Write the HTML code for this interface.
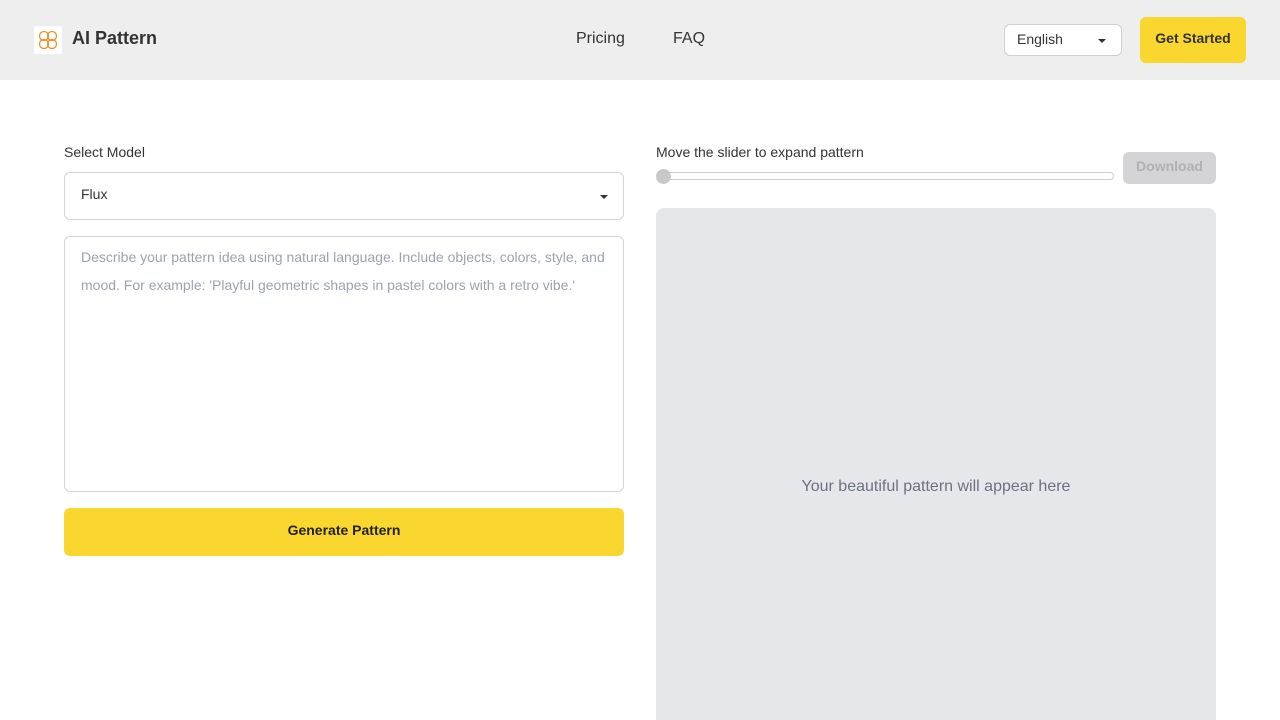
<!DOCTYPE html>
<html><head><meta charset="utf-8"><style>
*{box-sizing:border-box;margin:0;padding:0}
html,body{width:1280px;height:720px;overflow:hidden}
body{background:#fff;font-family:"Liberation Sans",sans-serif;color:#333;position:relative}
header{position:absolute;left:0;top:0;width:1280px;height:80px;background:#eeeeee}
.logo{position:absolute;left:34px;top:26px;width:28px;height:28px;background:#fff;border-radius:2px}
.brand{position:absolute;left:72px;top:28px;font-size:18px;font-weight:bold;color:#333}
.nav{position:absolute;top:30px;font-size:16px;color:#333}
.lang{position:absolute;left:1004px;top:24px;width:118px;height:32px;border:1px solid #d0d0d0;border-radius:6px;background:#fff;font-size:14px;padding:6px 12px;color:#333}
.caret{position:absolute;width:0;height:0;border-left:4px solid transparent;border-right:4px solid transparent;border-top:4px solid #333}
.gs{position:absolute;left:1140px;top:17px;width:106px;height:46px;background:#fad72e;border-radius:6px;font-size:14px;font-weight:bold;text-align:center;line-height:43px;color:#333}
.lbl{position:absolute;font-size:14px;color:#333}
.sel{position:absolute;left:64px;top:172px;width:560px;height:48px;border:1px solid #d4d4d4;border-radius:6px;font-size:14px;padding:13px 16px}
.ta{position:absolute;left:64px;top:236px;width:560px;height:256px;border:1px solid #d4d4d4;border-radius:6px;font-size:14px;padding:6px 16px;color:#9ca3af;line-height:28px}
.gen{position:absolute;left:64px;top:508px;width:560px;height:48px;background:#fad72e;border-radius:6px;text-align:center;line-height:44px;font-weight:bold;font-size:14px;color:#222}
.track{position:absolute;left:658px;top:172px;width:456px;height:8px;border:1px solid #ccc;border-radius:4px;background:#fff}
.thumb{position:absolute;left:656px;top:169px;width:15px;height:15px;border-radius:50%;background:#c8c8c8}
.dl{position:absolute;left:1123px;top:152px;width:93px;height:32px;background:#d4d4d6;border-radius:6px;color:#b0b0b3;font-weight:bold;font-size:14px;text-align:center;line-height:28px}
.prev{position:absolute;left:656px;top:208px;width:560px;height:512px;background:#e5e7eb;border-radius:8px 8px 0 0;text-align:center;padding-top:270px;font-size:16px;color:#6b7280}
</style></head><body>
<header>
<div class="logo"><svg width="28" height="28" viewBox="0 0 28 28" fill="none" stroke="#e8902a" stroke-width="1.3"><circle cx="10" cy="10" r="4.5"/><circle cx="18" cy="10" r="4.5"/><circle cx="10" cy="18" r="4.5"/><circle cx="18" cy="18" r="4.5"/></svg></div>
<div class="brand">AI Pattern</div>
<div class="nav" style="left:576px">Pricing</div>
<div class="nav" style="left:673px">FAQ</div>
<div class="lang">English<span class="caret" style="left:93px;top:14px"></span></div>
<div class="gs">Get Started</div>
</header>
<div class="lbl" style="left:64px;top:144px">Select Model</div>
<div class="sel">Flux<span class="caret" style="left:535px;top:22px"></span></div>
<div class="ta">Describe your pattern idea using natural language. Include objects, colors, style, and mood. For example: 'Playful geometric shapes in pastel colors with a retro vibe.'</div>
<div class="gen">Generate Pattern</div>
<div class="lbl" style="left:656px;top:144px">Move the slider to expand pattern</div>
<div class="track"></div><div class="thumb"></div>
<div class="dl">Download</div>
<div class="prev">Your beautiful pattern will appear here</div>
</body></html>
